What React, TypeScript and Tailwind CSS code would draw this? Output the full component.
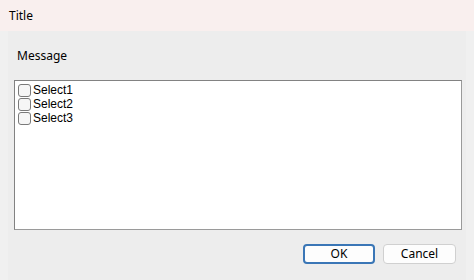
import React from "react";

const items = ["Select1", "Select2", "Select3"];

export default function App() {
  return (
    <div
      className="w-[474px] h-[280px] flex flex-col bg-[#f0f0f0] text-[12px] text-black overflow-hidden"
      style={{ fontFamily: '"Noto Sans", "Open Sans", sans-serif' }}
    >
      <header className="h-[31px] shrink-0 flex items-center pl-[9px] bg-[#f9efee]">
        Title
      </header>
      <div className="flex-1 flex flex-col mx-[8px] bg-[#ededed]">
        <div className="h-[49px] flex items-center pl-[9px] pt-[1px]">Message</div>
        <div className="ml-[6px] mr-[4px] h-[150px] bg-white border border-[#9a9a9a] border-t-[#828282] border-l-[#828282] pt-[2px] pl-[3px]">
          {items.map((s) => (
            <label key={s} className="h-[14px] flex items-center gap-[2px]">
              <span className="w-[13px] h-[13px] shrink-0 rounded-[3px] border border-[#7a7a7a] bg-[#f6f6f6]" />
              <span className="font-['Liberation_Sans',Arial,sans-serif] text-[12px] leading-[14px]">{s}</span>
            </label>
          ))}
        </div>
        <footer className="flex justify-end gap-[8px] pt-[14px] pr-[10px]">
          <button className="w-[72px] h-[20px] rounded-[4px] border-2 border-[#3a76b6] bg-[#fdfdfd] text-[12px] leading-none">
            OK
          </button>
          <button className="w-[73px] h-[20px] rounded-[4px] border border-[#d0d0d0] bg-[#fdfdfd] text-[12px] leading-none">
            Cancel
          </button>
        </footer>
      </div>
    </div>
  );
}
